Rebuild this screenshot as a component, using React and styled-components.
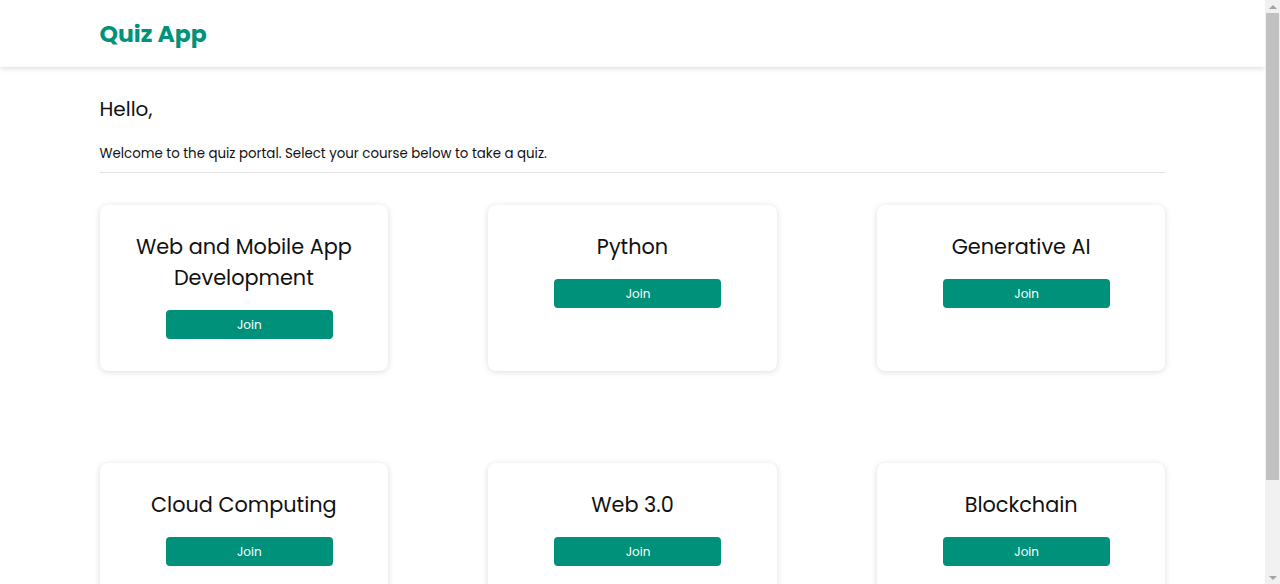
import React from 'react';
import styled, { createGlobalStyle } from 'styled-components';

const GlobalStyle = createGlobalStyle`
  * {
    box-sizing: border-box;
  }
  body {
    margin: 0;
    padding-right: 15px;
    background: #fff;
    color: #111;
    font-family: 'Poppins', 'Noto Sans', sans-serif;
  }
`;

// stand-in for the browser's classic scrollbar seen in the screenshot
const Scroll = {
  track: styled.div`
    position: fixed;
    top: 0;
    right: 0;
    bottom: 0;
    width: 15px;
    background: #f1f1f1;
    display: flex;
    flex-direction: column;
    align-items: center;
  `,

  arrow: styled.div`
    height: 13px;
    width: 100%;
    display: flex;
    align-items: center;
    justify-content: center;
    &:after {
      content: '';
      border-left: 4px solid transparent;
      border-right: 4px solid transparent;
      ${({ down }) => (down
        ? 'border-top: 4px solid #a3a3a3;'
        : 'border-bottom: 4px solid #a3a3a3;')}
    }
  `,

  thumb: styled.div`
    width: 13px;
    height: 467px;
    background: #c1c1c1;
  `,

  spacer: styled.div`
    flex: 1;
  `,
};

const Navbar = {
  bar: styled.header`
    height: 67px;
    background: #fff;
    box-shadow: 0 2px 5px rgba(0, 0, 0, 0.12);
    display: flex;
    align-items: center;
  `,

  brand: styled.h1`
    margin: 0;
    color: #00927a;
    font-size: 23.5px;
    font-weight: 700;
  `,
};

const Container = styled.div`
  width: 1066px;
  margin: 0 auto;
`;

const Greeting = styled.h2`
  margin: 28px 0 0;
  font-size: 20px;
  font-weight: 400;
  line-height: 28px;
`;

const Intro = styled.p`
  margin: 21px 0 0;
  font-size: 13.35px;
  line-height: 20px;
  padding-bottom: 8px;
  border-bottom: 1px solid #e2e2e2;
`;

const CourseGrid = styled.div`
  display: grid;
  grid-template-columns: repeat(3, 1fr);
  column-gap: 100px;
  row-gap: 92px;
  margin-top: 32px;
  padding-bottom: 70px;
`;

const Card = {
  block: styled.div`
    height: 166px;
    padding: 26px 20px 0;
    background: #fff;
    border-radius: 8px;
    box-shadow: 0 1px 6px rgba(0, 0, 0, 0.14);
    display: flex;
    flex-direction: column;
    align-items: center;
    text-align: center;
  `,

  title: styled.h3`
    margin: 0;
    font-size: 20.8px;
    font-weight: 400;
    line-height: 31px;
  `,

  button: styled.button`
    width: 167px;
    height: 29px;
    margin: 17px 0 0 11px;
    border: none;
    border-radius: 4px;
    background: #00917a;
    color: #fff;
    font-family: inherit;
    font-size: 12px;
    font-weight: 400;
    cursor: pointer;
  `,
};

const courses = [
  'Web and Mobile App Development',
  'Python',
  'Generative AI',
  'Cloud Computing',
  'Web 3.0',
  'Blockchain',
];

const App = () => (
  <>
    <GlobalStyle />
    <Navbar.bar>
      <Container>
        <Navbar.brand>Quiz App</Navbar.brand>
      </Container>
    </Navbar.bar>
    <Container>
      <Greeting>Hello,</Greeting>
      <Intro>Welcome to the quiz portal. Select your course below to take a quiz.</Intro>
      <CourseGrid>
        {courses.map((course) => (
          <Card.block key={course}>
            <Card.title>{course}</Card.title>
            <Card.button>Join</Card.button>
          </Card.block>
        ))}
      </CourseGrid>
    </Container>
    <Scroll.track>
      <Scroll.arrow />
      <Scroll.thumb />
      <Scroll.spacer />
      <Scroll.arrow down />
    </Scroll.track>
  </>
);

export default App;
